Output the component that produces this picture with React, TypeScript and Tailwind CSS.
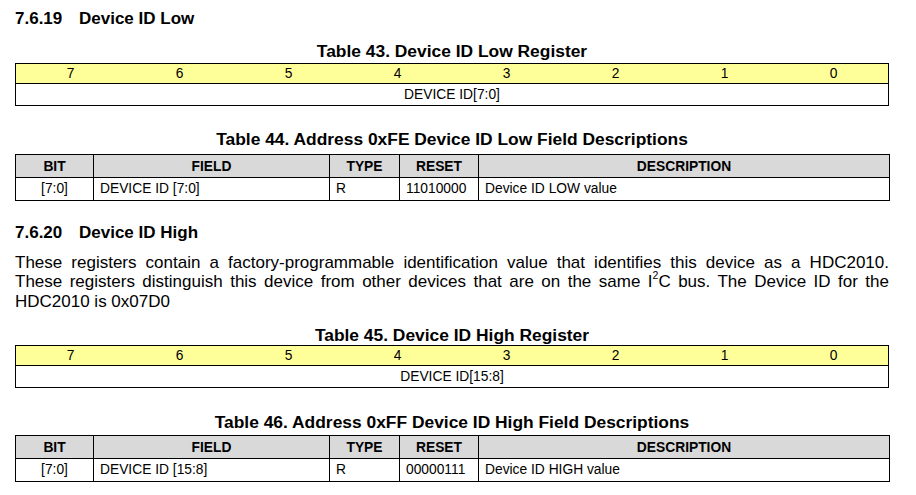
const bits = [7, 6, 5, 4, 3, 2, 1, 0];

type Field = { bit: string; field: string; type: string; reset: string; desc: string };

function SectionHeading({ num, title, className }: { num: string; title: string; className?: string }) {
  return (
    <h2 className={`flex text-[17px] leading-[20px] font-bold ${className ?? ""}`}>
      <span className="w-[64px] shrink-0">{num}</span>
      <span>{title}</span>
    </h2>
  );
}

function TableTitle({ children, className }: { children: React.ReactNode; className?: string }) {
  return <p className={`text-center text-[17.4px] leading-[20px] font-bold ${className ?? ""}`}>{children}</p>;
}

function RegisterTable({ label, className }: { label: string; className?: string }) {
  return (
    <div className={`border border-black text-[13.8px] ${className ?? ""}`}>
      <div className="grid h-[20px] grid-cols-8 items-center border-b border-black bg-[#ffff99] leading-[20px]">
        {bits.map((b) => (
          <span key={b} className="text-center">
            {b}
          </span>
        ))}
      </div>
      <div className="h-[21px] text-center leading-[21px]">{label}</div>
    </div>
  );
}

function FieldTable({ row, className }: { row: Field; className?: string }) {
  const th = "border border-black bg-[#d9d9d9] pt-[4px] text-center align-top font-bold";
  const td = "border border-black px-[6px] pt-[3px] align-top font-normal";
  return (
    <table className={`w-[874px] table-fixed border-collapse text-[13.8px] leading-[16px] ${className ?? ""}`}>
      <colgroup>
        <col className="w-[78px]" />
        <col className="w-[236px]" />
        <col className="w-[70px]" />
        <col className="w-[79px]" />
        <col className="w-[411px]" />
      </colgroup>
      <thead>
        <tr className="h-[23px]">
          <th className={th}>BIT</th>
          <th className={th}>FIELD</th>
          <th className={th}>TYPE</th>
          <th className={th}>RESET</th>
          <th className={th}>DESCRIPTION</th>
        </tr>
      </thead>
      <tbody>
        <tr className="h-[23px]">
          <td className={`${td} text-center`}>{row.bit}</td>
          <td className={`${td} text-left`}>{row.field}</td>
          <td className={`${td} text-left`}>{row.type}</td>
          <td className={`${td} text-left`}>{row.reset}</td>
          <td className={`${td} text-left`}>{row.desc}</td>
        </tr>
      </tbody>
    </table>
  );
}

export default function App() {
  return (
    <div className="h-[495px] w-[916px] overflow-hidden bg-white font-['Liberation_Sans',Arial,sans-serif] text-black">
      <div className="ml-[15px] w-[874px] pt-[9px]">
        <SectionHeading num="7.6.19" title="Device ID Low" />

        <TableTitle className="mt-[12px]">Table 43. Device ID Low Register</TableTitle>
        <RegisterTable label="DEVICE ID[7:0]" className="mt-[2px]" />

        <TableTitle className="mt-[23px]">Table 44. Address 0xFE Device ID Low Field Descriptions</TableTitle>
        <FieldTable
          className="mt-[5px]"
          row={{ bit: "[7:0]", field: "DEVICE ID [7:0]", type: "R", reset: "11010000", desc: "Device ID LOW value" }}
        />

        <SectionHeading num="7.6.20" title="Device ID High" className="mt-[22px]" />

        {/* description paragraph, lines kept as in the datasheet */}
        <div className="mt-[10px] text-[17px] leading-[19.4px]">
          <p className="text-justify [text-align-last:justify]">
            These registers contain a factory-programmable identification value that identifies this device as a HDC2010.
          </p>
          <p className="text-justify [text-align-last:justify]">
            These registers distinguish this device from other devices that are on the same I
            <sup className="-top-[8px] text-[10.5px] leading-none">2</sup>C bus. The Device ID for the
          </p>
          <p>HDC2010 is 0x07D0</p>
        </div>

        <TableTitle className="mt-[14px]">Table 45. Device ID High Register</TableTitle>
        <RegisterTable label="DEVICE ID[15:8]" className="mt-[0px]" />

        <TableTitle className="mt-[24px]">Table 46. Address 0xFF Device ID High Field Descriptions</TableTitle>
        <FieldTable
          className="mt-[3px]"
          row={{ bit: "[7:0]", field: "DEVICE ID [15:8]", type: "R", reset: "00000111", desc: "Device ID HIGH value" }}
        />
      </div>
    </div>
  );
}
